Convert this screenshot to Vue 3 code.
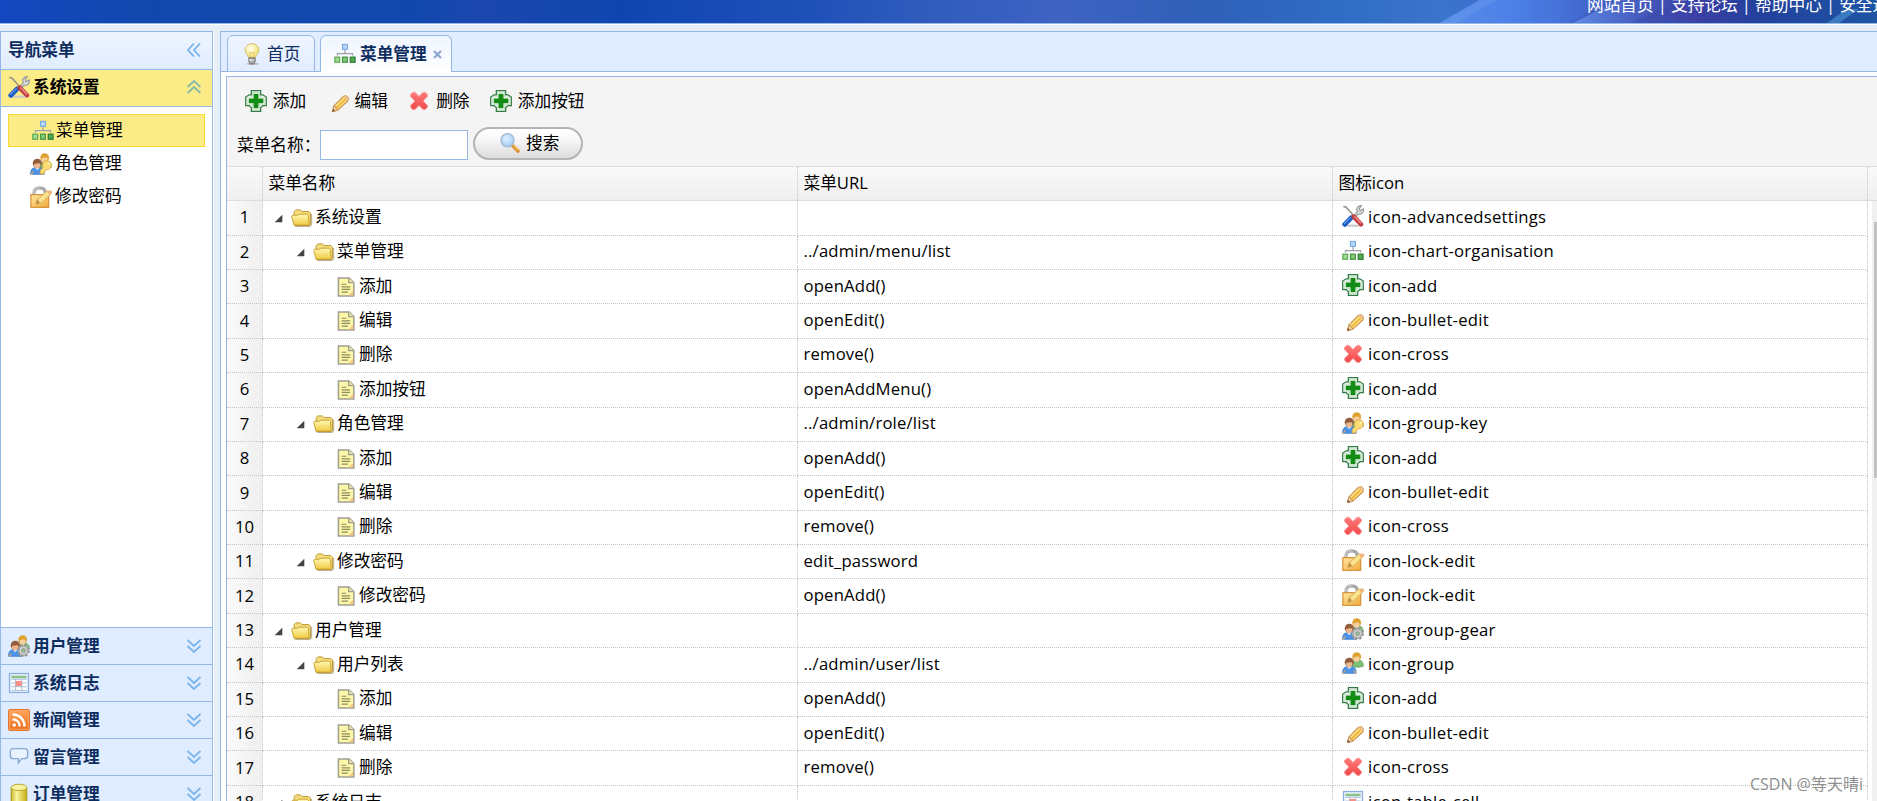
<script setup>
const links = ['网站首页', '支持论坛', '帮助中心', '安全退出']

const menu = [
  { text: '菜单管理', icon: 'chart', selected: true },
  { text: '角色管理', icon: 'groupkey' },
  { text: '修改密码', icon: 'lock' },
]

const sections = [
  { text: '用户管理', icon: 'groupgear' },
  { text: '系统日志', icon: 'table' },
  { text: '新闻管理', icon: 'rss' },
  { text: '留言管理', icon: 'comment' },
  { text: '订单管理', icon: 'database' },
]

const tools = [
  { text: '添加', icon: 'add' },
  { text: '编辑', icon: 'pencil' },
  { text: '删除', icon: 'cross' },
  { text: '添加按钮', icon: 'add' },
]

const row = (depth, name, url, icon, label, leaf = false) => ({ depth, name, url, icon, label, leaf })
const rows = [
  row(0, '系统设置', '', 'settings', 'icon-advancedsettings'),
  row(1, '菜单管理', '../admin/menu/list', 'chart', 'icon-chart-organisation'),
  row(2, '添加', 'openAdd()', 'add', 'icon-add', true),
  row(2, '编辑', 'openEdit()', 'pencil', 'icon-bullet-edit', true),
  row(2, '删除', 'remove()', 'cross', 'icon-cross', true),
  row(2, '添加按钮', 'openAddMenu()', 'add', 'icon-add', true),
  row(1, '角色管理', '../admin/role/list', 'groupkey', 'icon-group-key'),
  row(2, '添加', 'openAdd()', 'add', 'icon-add', true),
  row(2, '编辑', 'openEdit()', 'pencil', 'icon-bullet-edit', true),
  row(2, '删除', 'remove()', 'cross', 'icon-cross', true),
  row(1, '修改密码', 'edit_password', 'lock', 'icon-lock-edit'),
  row(2, '修改密码', 'openAdd()', 'lock', 'icon-lock-edit', true),
  row(0, '用户管理', '', 'groupgear', 'icon-group-gear'),
  row(1, '用户列表', '../admin/user/list', 'group', 'icon-group'),
  row(2, '添加', 'openAdd()', 'add', 'icon-add', true),
  row(2, '编辑', 'openEdit()', 'pencil', 'icon-bullet-edit', true),
  row(2, '删除', 'remove()', 'cross', 'icon-cross', true),
  row(0, '系统日志', '', 'table', 'icon-table-cell'),
]
</script>

<template>
  <div class="page">
    <svg class="defs" width="0" height="0" aria-hidden="true">
      <defs>
        <linearGradient id="gFolder" x1="0" y1="0" x2="0" y2="1"><stop offset="0" stop-color="#fff8b4" /><stop offset="1" stop-color="#f0cb45" /></linearGradient>
        <linearGradient id="gLock" x1="0" y1="0" x2="1" y2="1"><stop offset="0" stop-color="#fde9a0" /><stop offset="1" stop-color="#f2a93b" /></linearGradient>
        <linearGradient id="gRss" x1="0" y1="0" x2="0" y2="1"><stop offset="0" stop-color="#ffa55a" /><stop offset="1" stop-color="#ee6f1c" /></linearGradient>
        <linearGradient id="gDb" x1="0" y1="0" x2="1" y2="0"><stop offset="0" stop-color="#c9b820" /><stop offset=".35" stop-color="#fbf6a0" /><stop offset="1" stop-color="#c8ae12" /></linearGradient>
        <linearGradient id="gCross" x1="0" y1="0" x2="0" y2="1"><stop offset="0" stop-color="#ff7b7b" /><stop offset="1" stop-color="#f04848" /></linearGradient>
        <radialGradient id="gBulb" cx=".4" cy=".35" r=".7"><stop offset="0" stop-color="#ffffee" /><stop offset="1" stop-color="#f1dc62" /></radialGradient>
        <radialGradient id="gLens" cx=".4" cy=".35" r=".7"><stop offset="0" stop-color="#dff1ff" /><stop offset="1" stop-color="#9fcbf5" /></radialGradient>

        <symbol id="add" viewBox="0 0 16 16">
          <path d="M4.6 .5h6.8v3h1.6l2.5 1.6v6.300h-2.500l-1.600 1.400v2.700H4.600v-2.700L3 11.400H.5V5.100L3 3.500h1.600z" fill="#f2fbf2" stroke="#347a47" stroke-width=".9" />
          <path d="M5.500 1.600h5v3.600h3.900v5.200h-3.900v4h-5v-4H1.600V5.200h3.900z" fill="#fff" stroke="#a9cfad" stroke-width=".5" />
          <path d="M6.200 2.700h3.600v3.500h3.600v3.500H9.800v3.600H6.200V9.700H2.700V6.200h3.500z" fill="#128c14" />
        </symbol>
        <symbol id="pencil" viewBox="0 0 16 16">
          <path d="M4 15.600l1-4 7-7 2-.3 1.500 1.500-.2 2-7.300 6.800z" fill="#fae087" stroke="#c98c42" stroke-width=".8" />
          <path d="M6.700 13.300l7-7" stroke="#f0b93a" stroke-width="1.400" />
          <path d="M11.800 4.700l2.200-.4 1.500 1.500-.3 2z" fill="#f2bf92" />
          <path d="M4 15.600l1-4 1.200.3.500 1.600 1.200.6-1 .9z" fill="#eed2a4" stroke="#b77e42" stroke-width=".5" />
          <path d="M4 15.600l.5-1.800 1.300 1.400z" fill="#694a2c" />
        </symbol>
        <symbol id="cross" viewBox="0 0 16 16">
          <path d="M3.600 1.600l1.600.2L8 4.700l2.800-2.900 1.600-.2 1.800 1.800-.2 1.400L11 8l3 3 .2 1.400-1.800 1.900-1.600-.3L8 11.200l-2.800 2.900-1.600.2-1.800-1.900.2-1.400L5 8 2 4.900l-.2-1.500z" fill="url(#gCross)" stroke="#fb9797" stroke-width=".7" />
        </symbol>
        <symbol id="chart" viewBox="0 0 16 16">
          <path d="M8 5v3M2.500 9V7.700h11V9" fill="none" stroke="#9aa0a5" stroke-width=".9" />
          <rect x="6.200" y="1" width="3.600" height="3.600" fill="#b8d6fb" stroke="#78a8e4" stroke-width=".8" />
          <g stroke-width=".9">
            <rect x=".6" y="10.300" width="3.500" height="3.700" fill="#a3d995" stroke="#5eac54" />
            <rect x="6.200" y="10.300" width="3.500" height="3.700" fill="#86c979" stroke="#439742" />
            <rect x="11.800" y="10.300" width="3.500" height="3.700" fill="#55ac4c" stroke="#2f7d32" />
          </g>
        </symbol>
        <symbol id="settings" viewBox="0 0 16 16">
          <ellipse cx="8" cy="15" rx="6.500" ry=".8" fill="#c9c9c9" />
          <path d="M1 1l2 .6 5.500 6.200" fill="none" stroke="#99938c" stroke-width="1.200" />
          <path d="M8 8.200l3-3-.3-2.700L12.400.8l1.700-.3-1.500 2.200.6 1.400 2.300-1.300.1 1.800-1.600 1.900-2.500.4-2.600 2.600z" fill="#d9d9d9" stroke="#93979b" stroke-width=".8" />
          <path d="M6.600 9.400l-4.600 4.700" stroke="#1c5bc4" stroke-width="3.500" stroke-linecap="round" />
          <path d="M6.300 9l-4.700 4.600" stroke="#5e9bf0" stroke-width=".9" />
          <path d="M8.500 8.500l5.300 5.500" stroke="#c43f42" stroke-width="3.300" stroke-linecap="round" />
          <path d="M9 8.300l4.800 5" stroke="#f09996" stroke-width=".9" />
        </symbol>
        <symbol id="group" viewBox="0 0 16 16">
          <path d="M7.500 10c0-3 1.500-4.200 3.700-4.200 3 0 4.300 1.200 4.300 4.600l-3 .6H8z" fill="#7cc077" stroke="#5a9c59" stroke-width=".5" />
          <circle cx="10.700" cy="3.400" r="3.200" fill="#dfa232" />
          <path d="M8.600 3.800c2-.2 3-1 4.100 0v1.400c-.3 1.300-.9 1.900-2 1.900s-1.800-.7-2.100-1.900z" fill="#f8cf9f" />
          <path d="M.4 15.500c0-3.600 1.300-5 4.800-5s5.100 1.400 5.100 5z" fill="#4c92e6" stroke="#2c6fc4" stroke-width=".5" />
          <path d="M3.500 10.700l1.800 1.800 1.700-1.800z" fill="#d9ebfb" />
          <circle cx="5.300" cy="7.500" r="3.300" fill="#935c3c" />
          <path d="M3 7.800c2.200.2 3-.8 4.500 0v1.400c-.4 1.400-1.100 2-2.200 2s-1.900-.7-2.300-2z" fill="#efb78c" />
          <path d="M.8 15.600l1.400-2M10 15.600l-1.400-2" stroke="#e3a670" stroke-width="1" />
        </symbol>
        <symbol id="groupkey" viewBox="0 0 16 16">
          <use href="#group" width="16" height="16" />
          <path d="M7.400 15.200v-2.400l2-2.200c-1-2.800.5-5.100 3.200-4.900 2.700.2 3.700 3 2.300 5.100-.8 1.300-2 1.500-3.100 1.400l-2.300 3z" fill="#f9dc74" stroke="#d9a436" stroke-width=".6" />
          <circle cx="13.500" cy="7.800" r=".7" fill="#fff7cf" />
        </symbol>
        <symbol id="groupgear" viewBox="0 0 16 16">
          <use href="#group" width="16" height="16" />
          <circle cx="11.300" cy="11.300" r="3.900" fill="#d0d0d0" stroke="#969696" stroke-width="1.500" stroke-dasharray="1.700 1.360" />
          <circle cx="11.300" cy="11.300" r="3.300" fill="#cfcfcf" stroke="#989898" stroke-width=".7" />
          <circle cx="11.300" cy="11.300" r="1.400" fill="#8fc28b" stroke="#8f8f8f" stroke-width=".6" />
        </symbol>
        <symbol id="lock" viewBox="0 0 16 16">
          <path d="M2.800 7.500V5.300C2.800 2.600 4.500 1.400 7 1.400s4.200 1.200 4.200 3.900v2.200" fill="none" stroke="#a8a8a8" stroke-width="2.300" />
          <path d="M2.600 7V5.300C2.600 2.600 4.500 1.200 7 1.200" fill="none" stroke="#dedede" stroke-width=".7" />
          <rect x=".6" y="6.300" width="13" height="9.200" fill="url(#gLock)" stroke="#d28a2c" stroke-width=".8" />
          <path d="M4.300 13.400l.8-3.100 7-6.600h3.300l.2 1.600-7.200 7z" fill="#fae38d" stroke="#d6a04c" stroke-width=".6" />
          <path d="M12.200 3.700h3.200l.1 1.600-1.300 1.500z" fill="#f2b57d" />
          <path d="M4.300 13.400l.8-3.100 1.300.3.700 1.700z" fill="#c08a48" />
        </symbol>
        <symbol id="table" viewBox="0 0 16 16">
          <rect x="1.100" y="1.100" width="13.800" height="13.800" fill="#e6f0fd" stroke="#8eaede" stroke-width=".9" />
          <path d="M2.500 2.700h11v1.800h-11z" fill="#8fc487" />
          <path d="M2.500 5.300h11v8.200h-11z" fill="#fff" />
          <path d="M2.500 5.300h11M2.500 8h11M2.500 10.700h11M2.500 13.400h11M5.500 5v8.500M10 5v8.500" stroke="#a9bedb" stroke-width=".7" />
          <rect x="5.500" y="6.500" width="4.500" height="3.700" fill="#fa8f88" />
        </symbol>
        <symbol id="rss" viewBox="0 0 16 16">
          <rect x=".5" y=".5" width="15" height="15" rx="1.200" fill="url(#gRss)" stroke="#e7762b" />
          <rect x="1.300" y="1.300" width="13.400" height="13.400" fill="none" stroke="#ffbb82" stroke-width=".5" />
          <path d="M3.300 4c5 0 8.700 3.700 8.700 8.700M3.300 7.500c3.200 0 5.200 2 5.200 5.200" fill="none" stroke="#fff" stroke-width="1.700" />
          <circle cx="4.500" cy="11.600" r="1.300" fill="#fff" />
        </symbol>
        <symbol id="comment" viewBox="0 0 16 16">
          <path d="M4 1.900h8c1.500 0 2.300.8 2.300 2.200v2.900c0 1.400-.8 2.200-2.300 2.200H9.900l-2.400 3.200V9.200H4c-1.500 0-2.300-.8-2.300-2.200V4.100C1.700 2.700 2.500 1.900 4 1.900z" fill="#e9f3ff" stroke="#86a9cf" stroke-width="1" />
        </symbol>
        <symbol id="database" viewBox="0 0 16 16">
          <path d="M2.300 3.300v10c0 3 11.400 3 11.400 0v-10z" fill="url(#gDb)" stroke="#a99a20" stroke-width=".7" />
          <ellipse cx="8" cy="3.200" rx="5.700" ry="2.300" fill="#f8f3a2" stroke="#b6a72c" stroke-width=".7" />
        </symbol>
        <symbol id="bulb" viewBox="0 0 16 16">
          <ellipse cx="8.500" cy="15.200" rx="4.500" ry=".7" fill="#aaa" />
          <path d="M8 .5c3 0 5 2.200 5 4.600 0 2.500-2.200 3.300-2.500 5.700h-5C5.200 8.400 3 7.600 3 5.100 3 2.700 5 .5 8 .5z" fill="url(#gBulb)" stroke="#cdbd71" stroke-width=".7" />
          <path d="M6.900 10.700L6.300 6.500 8 7.700l1.700-1.200-.6 4.200" fill="none" stroke="#d9be52" stroke-width=".5" />
          <path d="M5.700 10.800h4.600v2.700L9.300 15.200H6.700L5.700 13.500z" fill="#aaa" stroke="#666" stroke-width=".6" />
          <path d="M5.800 12.400h3.400" stroke="#f4f4f4" stroke-width=".8" />
        </symbol>
        <symbol id="search" viewBox="0 0 16 16">
          <path d="M9.800 9.800l4 4" stroke="#d9932f" stroke-width="2.700" stroke-linecap="round" />
          <path d="M10.700 9.900l3.300 3.300" stroke="#f7cd77" stroke-width=".8" />
          <circle cx="6.200" cy="6" r="4.700" fill="url(#gLens)" stroke="#a9bfd8" stroke-width="1.200" />
        </symbol>
        <symbol id="folder" viewBox="0 0 16 16">
          <path d="M2.300 7V3.300l1.200-1.200h3.300l1.200 1.200h5l1.200 1.200v8l-1 1H2.500z" fill="#f2dc7c" stroke="#c19a30" stroke-width=".7" />
          <path d="M.5 6.700l.6-.7h3.700l1-.8h6l.9.900.5 7.100H2.200z" fill="url(#gFolder)" stroke="#c9a032" stroke-width=".7" />
          <path d="M3 14.100h10.800l1.200-1.200V5" fill="none" stroke="#93825a" stroke-opacity=".6" stroke-width=".8" />
        </symbol>
        <symbol id="file" viewBox="0 0 16 16">
          <path d="M2.500 1.500h7.800l3.400 3.200v9.800H2.500z" fill="#fdf8a8" stroke="#a09f94" stroke-width="1.100" />
          <path d="M9.900 1.300v3.500h3.800" fill="#e8e3a1" stroke="#a09f94" stroke-width=".9" />
          <path d="M4.800 6h3.500M4.800 7.900h6.200M4.800 9.800h6.200M4.800 11.700h4.600" stroke="#8f8a62" stroke-width=".9" />
          <path d="M10 14l3.200-3.200V14z" fill="#fac680" />
        </symbol>
      </defs>
    </svg>

    <header class="banner">
      <svg class="rays" viewBox="0 0 520 23" preserveAspectRatio="none" aria-hidden="true">
        <defs>
          <linearGradient id="ray" x1="0" y1="0" x2="1" y2="0"><stop offset="0" stop-color="#5a90ec" stop-opacity=".8" /><stop offset=".4" stop-color="#4e82e8" /><stop offset="1" stop-color="#4b78e2" stop-opacity="0" /></linearGradient>
          <linearGradient id="ray2" x1="0" y1="0" x2="1" y2="0"><stop offset="0" stop-color="#6f9cf0" stop-opacity=".7" /><stop offset="1" stop-color="#4b62cc" stop-opacity="0" /></linearGradient>
        </defs>
        <path d="M82 23L122 0h130l-40 23z" fill="url(#ray)" />
        <path d="M84 23L124 0h16L100 23z" fill="#82aef5" fill-opacity=".22" />
        <path d="M216 23L262 0h60l-48 23z" fill="url(#ray2)" />
        <path d="M470 23l20-14h12l-20 14z" fill="#55a6e0" fill-opacity=".5" />
      </svg>
      <nav class="links">
        <template v-for="(link, i) in links" :key="link">
          <span v-if="i" class="bar">|</span><span>{{ link }}</span>
        </template>
      </nav>
    </header>

    <div class="main">
      <aside class="side">
        <div class="side-title">
          <span>导航菜单</span>
          <svg class="chev" viewBox="0 0 14 14"><path d="M7 .5L1 7l6 6.500M13 .5L7 7l6 6.500" /></svg>
        </div>
        <div class="section open">
          <svg class="ico"><use href="#settings" /></svg>
          <span>系统设置</span>
          <svg class="chev" viewBox="0 0 14 14"><path d="M.5 7L7 1l6.500 6M.5 13L7 7l6.500 6" /></svg>
        </div>
        <ul class="menu">
          <li v-for="m in menu" :key="m.text" :class="{ selected: m.selected }">
            <svg class="ico"><use :href="'#' + m.icon" /></svg><span>{{ m.text }}</span>
          </li>
        </ul>
        <div v-for="s in sections" :key="s.text" class="section">
          <svg class="ico"><use :href="'#' + s.icon" /></svg>
          <span>{{ s.text }}</span>
          <svg class="chev" viewBox="0 0 14 14"><path d="M.5 1L7 7l6.500-6M.5 7L7 13l6.500-6" /></svg>
        </div>
      </aside>

      <section class="content">
        <div class="tabs">
          <div class="tab first"><svg class="ico"><use href="#bulb" /></svg><span>首页</span></div>
          <div class="tab active">
            <svg class="ico"><use href="#chart" /></svg><span>菜单管理</span>
            <svg class="close" viewBox="0 0 9 9"><path d="M1 1l7 7M8 1L1 8" /></svg>
          </div>
        </div>

        <div class="grid">
          <div class="toolbar">
            <div class="tools">
              <button v-for="(t, i) in tools" :key="i" class="tool">
                <svg class="ico"><use :href="'#' + t.icon" /></svg><span>{{ t.text }}</span>
              </button>
            </div>
            <div class="query">
              <label for="name">菜单名称：</label>
              <input id="name" type="text" />
              <button class="search"><svg class="ico"><use href="#search" /></svg><span>搜索</span></button>
            </div>
          </div>

          <div class="thead">
            <div class="cell"></div>
            <div class="cell">菜单名称</div>
            <div class="cell">菜单URL</div>
            <div class="cell">图标icon</div>
          </div>
          <div class="tbody">
            <div class="rows">
              <div v-for="(r, i) in rows" :key="i" class="tr">
                <div class="cell num">{{ i + 1 }}</div>
                <div class="cell tree">
                  <i v-for="n in r.depth" :key="n" class="indent"></i>
                  <i class="indent"><svg v-if="!r.leaf" class="arrow" viewBox="0 0 9 9"><path d="M8.300.7v7.600H.7z" /></svg></i>
                  <svg class="ico"><use :href="r.leaf ? '#file' : '#folder'" /></svg>
                  <span>{{ r.name }}</span>
                </div>
                <div class="cell url">{{ r.url }}</div>
                <div class="cell icn"><svg class="ico"><use :href="'#' + r.icon" /></svg><span>{{ r.label }}</span></div>
              </div>
            </div>
            <div class="scroll"><div class="thumb"></div></div>
          </div>
        </div>
      </section>
    </div>
    <div class="mark">CSDN @等天晴i</div>
  </div>
</template>

<style>
html, body { margin: 0; overflow: hidden; }
</style>

<style scoped>
.page {
  position: relative;
  height: 801px;
  overflow: hidden;
  display: flex;
  flex-direction: column;
  background: #e6eef8;
  font: 400 16.7px/22px "Open Sans", "Noto Sans CJK SC", sans-serif;
  color: #000;
  white-space: nowrap;
}
.defs { position: absolute; }
.page * { box-sizing: border-box; }
.ico { width: 22px; height: 22px; flex: none; display: block; }

.banner {
  position: relative;
  height: 25px;
  flex: none;
  border-bottom: 1px solid #fff;
  box-shadow: inset 0 -1px #95b8e7;
  background: linear-gradient(90deg, #1447c0 0, #1049ad 150px, #1248ad 420px, #1b47ae 480px, #0f46ae 620px, #1e50b8 800px, #2f5bbd 920px, #3e63c3 1060px, #3060b8 1200px, #2f6bc4 1330px, #3a74cc 1440px, #3f68cd 1560px, #4053b4 1640px, #3a3fa4 1700px, #23419c 1760px, #1e55a5 1877px);
}
.rays { position: absolute; right: 0; top: 0; width: 520px; height: 23px; }
.links { position: absolute; left: 1587px; top: -6px; display: flex; color: #fff; }
.bar { width: 17.300px; text-align: center; }

.main { flex: 1; display: flex; gap: 7px; margin-top: 6px; min-height: 0; }
.side {
  width: 213px;
  flex: none;
  display: flex;
  flex-direction: column;
  overflow: hidden;
  border: solid #95b8e7;
  border-width: 1px 1px 0;
  background: #fff;
  box-shadow: 1px 0 #fff;
  color: #0e2d5f;
  font-weight: 700;
}
.side-title {
  height: 38px;
  flex: none;
  display: flex;
  align-items: center;
  justify-content: space-between;
  padding: 0 11px 1px 7px;
  border-bottom: 1px solid #95b8e7;
  background: linear-gradient(#eff5ff, #e0ecff);
}
.chev { width: 14px; height: 14px; fill: none; stroke: #79b5ec; stroke-width: 1.800; flex: none; }
.section {
  height: 37px;
  flex: none;
  display: flex;
  align-items: center;
  gap: 3px;
  padding: 0 11px 0 7px;
  border-top: 1px solid #95b8e7;
  background: #e0ecff;
}
.section .chev { margin-left: auto; }
.section.open { border-top: 0; border-bottom: 1px solid #95b8e7; background: #fbec88; color: #000; }
.section.open .chev { stroke: #86b8ab; }
.section.open .ico, .section.open .chev { margin-top: -2px; }
.section.open span { margin-top: -2px; }
.menu { height: 520px; flex: none; margin: 0; padding: 7px; list-style: none; color: #000; font-weight: 400; }
.menu li { height: 33px; display: flex; align-items: center; gap: 3px; padding-left: 22px; }
.menu .selected { padding-left: 23px; background: #fbec88; border: 1px solid #fadd2b; }
.menu span { margin-top: -2px; }
.menu .selected span { margin-left: -1px; }

.content { flex: 1; min-width: 0; display: flex; flex-direction: column; border: solid #95b8e7; border-width: 1px 0 0 1px; background: #fff; }
.tabs { height: 40px; flex: none; display: flex; align-items: flex-end; gap: 5px; padding-left: 6px; background: #e0ecff; box-shadow: inset 0 -1px #95b8e7; }
.tab {
  height: 37px;
  display: flex;
  align-items: center;
  gap: 4px;
  border: 1px solid #95b8e7;
  border-radius: 6px 6px 0 0;
  background: linear-gradient(#eff5ff, #e0ecff);
  color: #0e2d5f;
}
.tab.first { width: 88px; padding-left: 13px; }
.tab.active { width: 132px; padding-left: 13px; border-bottom: 0; background: linear-gradient(#eff5ff, #fff); font-weight: 700; }
.close { width: 9px; height: 9px; margin-left: 2px; stroke: #8ba7d0; stroke-width: 2.200; }

.grid { flex: 1; min-height: 0; display: flex; flex-direction: column; margin: 4px 0 0 5px; border: solid #95b8e7; border-width: 1px 0 0 1px; }
.toolbar { height: 89px; flex: none; background: #f4f4f4; }
.tools { display: flex; gap: 20.500px; padding: 13px 0 0 18px; }
button { font: inherit; color: inherit; border: 0; padding: 0; background: none; }
.tool { display: flex; align-items: center; gap: 5.800px; }
.query { display: flex; align-items: center; padding: 15px 0 0 10px; }
.query label { width: 83px; margin-top: 2px; }
.query input { width: 148px; height: 30px; margin: 2px 5px 0 0; border: 1px solid #95b8e7; background: #fff; }
.search { width: 110px; height: 33px; display: flex; align-items: center; gap: 5px; padding: 0 0 2px 24px; border: 2px solid #b4b4b4; border-radius: 17px; background: linear-gradient(#fff, #fafafa 30%, #dcdcdc); }

.thead, .tr { display: grid; grid-template-columns: 36px 535px 535px 535px; }
.thead { height: 35px; flex: none; border: solid #ddd; border-width: 1px 0; background: linear-gradient(#f9f9f9, #efefef); }
.cell { display: flex; align-items: center; border-right: 1px dotted #c4c4c4; padding: 0 0 2px 5.500px; }
.tbody { flex: 1; min-height: 0; display: flex; justify-content: space-between; overflow: hidden; padding-top: .2px; }
.tr { height: 34.400px; }
.tr .cell { border-bottom: 1px dotted #c4c4c4; }
.tr .num { justify-content: center; padding: 0 0 1px; background: linear-gradient(90deg, #fafafa, #efefef); }
.indent { width: 22px; height: 22px; flex: none; display: block; }
.arrow { display: block; width: 9px; height: 9px; margin: 8px 0 0 5px; fill: #444; }
.tree .ico { margin-top: 2px; }
.tree span { margin-left: 2.500px; }
.url { letter-spacing: .17px; }
.icn { padding-left: 9px; letter-spacing: .23px; }
.icn span { margin-left: 4px; }
.icn .ico { margin-top: -1px; }
.scroll { width: 5px; background: #f1f1f1; padding: 21px 0 0 2px; }
.thumb { height: 256px; background: #c1c1c1; }
.mark { position: absolute; right: 14px; bottom: 6px; color: #8f8f8f; font-size: 16px; }
</style>
